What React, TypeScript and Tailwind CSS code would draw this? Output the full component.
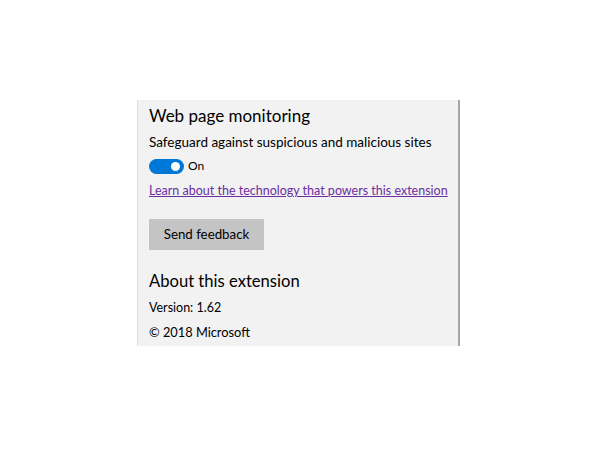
export default function App() {
  return (
    <div className="min-h-[449px] w-full bg-white pt-[100px] pl-[137px] font-['Lato',sans-serif] text-[#000] whitespace-nowrap">
      {/* Extension options panel */}
      <div className="w-[323px] h-[246px] bg-[#f2f2f2] border-l border-l-[#dcdcdc] border-r-2 border-r-[#a6a6a6] pl-[11px] pt-[5px]">
        <h2 className="text-[17px] leading-[22px] font-normal">Web page monitoring</h2>
        <p className="mt-[5px] text-[13.5px] leading-[20px]">Safeguard against suspicious and malicious sites</p>

        {/* Toggle */}
        <div className="mt-[6px] flex items-center gap-[4px]">
          <div className="w-[35px] h-[15px] rounded-full bg-[#0078d7] flex items-center justify-end pr-[4px]">
            <div className="w-[9px] h-[9px] rounded-full bg-white" />
          </div>
          <span className="text-[12px] leading-[16px]">On</span>
        </div>

        <a href="#" className="mt-[8px] block text-[12.5px] leading-[18px] text-[#6b2fa0] underline">
          Learn about the technology that powers this extension
        </a>

        <button className="mt-[19px] w-[115px] h-[31px] bg-[#c4c4c4] text-[13.3px]">Send feedback</button>

        <h2 className="mt-[20px] text-[16.6px] leading-[22px] font-normal">About this extension</h2>
        <p className="mt-[7px] text-[12.5px] leading-[18px]">Version: 1.62</p>
        <p className="mt-[6px] text-[12.8px] leading-[18px]">© 2018 Microsoft</p>
      </div>
    </div>
  );
}
